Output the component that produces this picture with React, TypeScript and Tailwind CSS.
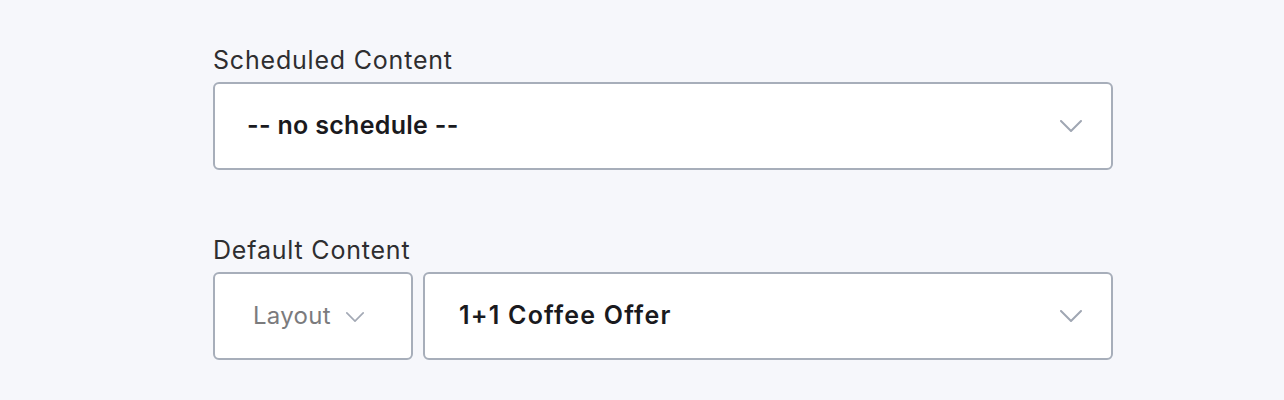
function Chevron({ className }: { className?: string }) {
    return (
        <svg viewBox="0 0 22 12" fill="none" className={className}>
            <path d="M1 1l10 10L21 1" stroke="currentColor" strokeWidth="2" strokeLinecap="round" strokeLinejoin="round" />
        </svg>
    )
}

function Select({ label, className, textClass }: { label: string; className?: string; textClass?: string }) {
    return (
        <div
            className={
                'flex h-[88px] items-center justify-between rounded-[6px] border-2 border-[#a7aeba] bg-white pr-[29px] ' +
                (className ?? '')
            }
        >
            <span className={'text-[25px] font-semibold text-[#1a1a1e] ' + (textClass ?? '')}>{label}</span>
            <Chevron className="h-[12px] w-[22px] text-[#a0a7b3]" />
        </div>
    )
}

export default function App() {
    return (
        <div
            className="min-h-[400px] w-full bg-[#f6f7fb] pl-[213px] pt-[44px]"
            style={{ fontFamily: 'Inter, "Noto Sans", sans-serif' }}
        >
            <div className="w-[900px]">
                <div className="text-[25px] leading-[32px] tracking-[0.8px] text-[#2e2e30]">Scheduled Content</div>
                <Select label="-- no schedule --" className="mt-[6px] pl-8" textClass="tracking-[0.3px]" />

                <div className="mt-[64px] text-[25px] leading-[32px] tracking-[0.8px] text-[#2e2e30]">Default Content</div>
                <div className="mt-[6px] flex gap-[10px]">
                    <div className="flex h-[88px] w-[200px] shrink-0 items-center rounded-[6px] border-2 border-[#a7aeba] bg-white pl-[38px]">
                        <span className="text-[24px] tracking-[0.3px] text-[#7b7b7d]">Layout</span>
                        <Chevron className="ml-[15px] mt-[2px] h-[10px] w-[18px] text-[#a3a9b5]" />
                    </div>
                    <Select label="1+1 Coffee Offer" className="flex-1 pl-[34px]" textClass="tracking-[1.2px]" />
                </div>
            </div>
        </div>
    )
}
